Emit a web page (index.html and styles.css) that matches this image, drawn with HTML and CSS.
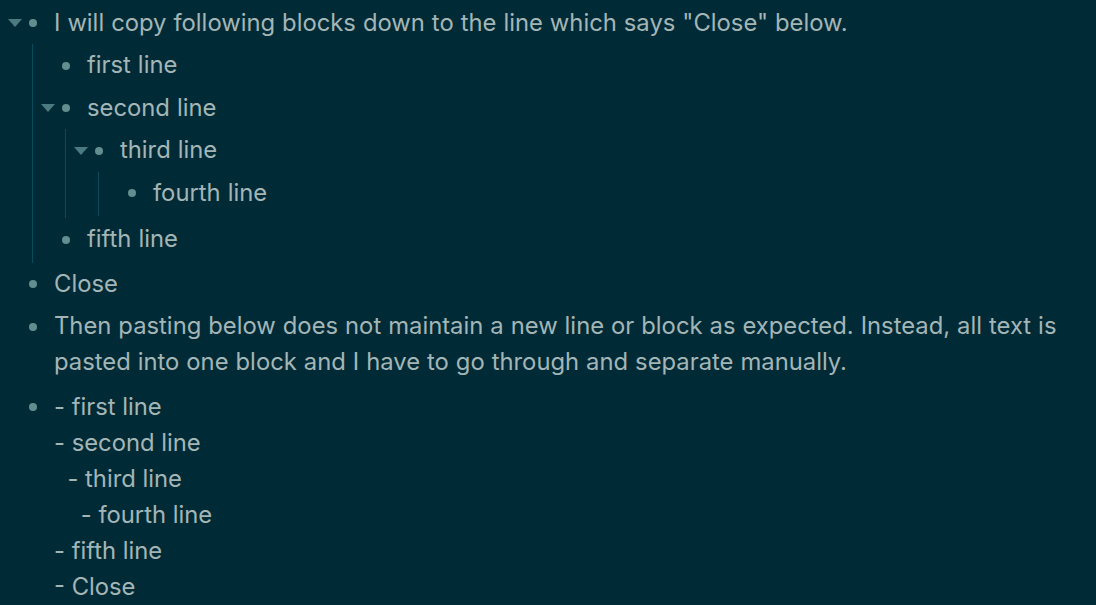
FILE: index.html
```html
<!DOCTYPE html>
<html>
<head>
<meta charset="utf-8">
<link rel="stylesheet" href="styles.css">
</head>
<body>
<div class="page">
  <div class="block">
    <div class="row">
      <span class="toggle"><svg width="14" height="8" viewBox="0 0 14 8"><path d="M0 0H14L7 8Z"/></svg></span>
      <span class="bullet"><i></i></span>
      <div class="content">I will copy following blocks down to the line which says "Close" below.</div>
    </div>
    <div class="children">
      <div class="block">
        <div class="row">
          <span class="toggle"></span>
          <span class="bullet"><i></i></span>
          <div class="content">first line</div>
        </div>
      </div>
      <div class="block">
        <div class="row">
          <span class="toggle"><svg width="14" height="8" viewBox="0 0 14 8"><path d="M0 0H14L7 8Z"/></svg></span>
          <span class="bullet"><i></i></span>
          <div class="content">second line</div>
        </div>
        <div class="children">
          <div class="block">
            <div class="row">
              <span class="toggle"><svg width="14" height="8" viewBox="0 0 14 8"><path d="M0 0H14L7 8Z"/></svg></span>
              <span class="bullet"><i></i></span>
              <div class="content">third line</div>
            </div>
            <div class="children">
              <div class="block">
                <div class="row">
                  <span class="toggle"></span>
                  <span class="bullet"><i></i></span>
                  <div class="content">fourth line</div>
                </div>
              </div>
            </div>
          </div>
        </div>
      </div>
      <div class="block">
        <div class="row">
          <span class="toggle"></span>
          <span class="bullet"><i></i></span>
          <div class="content">fifth line</div>
        </div>
      </div>
    </div>
  </div>
  <div class="block">
    <div class="row">
      <span class="toggle"></span>
      <span class="bullet"><i></i></span>
      <div class="content">Close</div>
    </div>
  </div>
  <div class="block">
    <div class="row">
      <span class="toggle"></span>
      <span class="bullet"><i></i></span>
      <div class="content">Then pasting below does not maintain a new line or block as expected. Instead, all text is pasted into one block and I have to go through and separate manually.</div>
    </div>
  </div>
  <div class="block pasted">
    <div class="row">
      <span class="toggle"></span>
      <span class="bullet"><i></i></span>
      <div class="content pre">- first line
- second line
  - third line
    - fourth line
- fifth line
- Close</div>
    </div>
  </div>
</div>
</body>
</html>
```

FILE: styles.css
```css
html, body {
  margin: 0;
  padding: 0;
  background: #002b36;
}
body {
  font-family: Inter, "Noto Sans", sans-serif;
  font-size: 23.8px;
  color: #a4b5b6;
  overflow: hidden;
}
.page {
  padding-top: 1.5px;
}
.row {
  display: flex;
  align-items: flex-start;
  padding: 3.25px 0;
}
.toggle {
  width: 14px;
  margin-left: 8px;
  height: 36px;
  display: flex;
  align-items: center;
  justify-content: center;
}
.toggle svg {
  fill: #4a7b80;
  margin-top: 1px;
}
.bullet {
  width: 9px;
  margin-left: 6px;
  height: 36px;
  display: flex;
  align-items: center;
  justify-content: center;
}
.bullet i {
  display: block;
  width: 8px;
  height: 8px;
  border-radius: 50%;
  background: #628e8f;
  margin-top: 1px;
}
.content {
  margin-left: 17px;
  line-height: 36px;
  flex: 1;
  padding-right: 20px;
  word-spacing: 0.3px;
}
.content.pre {
  white-space: pre;
  word-spacing: 0;
}
.children {
  margin-left: 32px;
  border-left: 1px solid #0b4a5b;
  padding-bottom: 2px;
}
.pasted {
  margin-top: 2px;
}
```
